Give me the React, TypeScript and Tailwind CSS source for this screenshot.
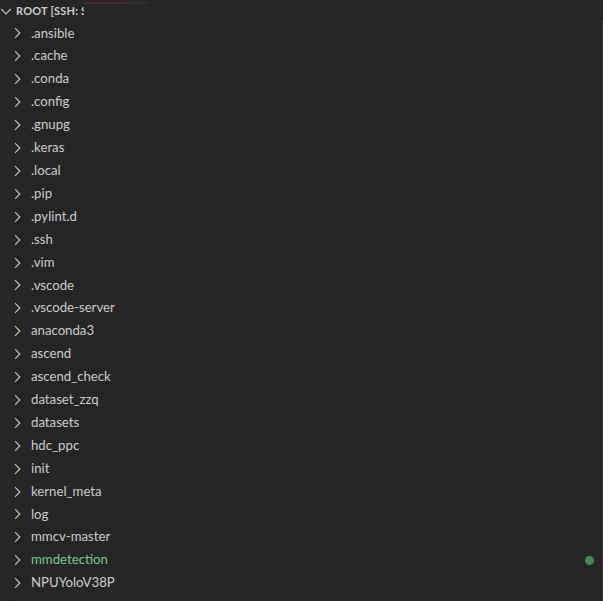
import React from "react";

const folders = [
  ".ansible",
  ".cache",
  ".conda",
  ".config",
  ".gnupg",
  ".keras",
  ".local",
  ".pip",
  ".pylint.d",
  ".ssh",
  ".vim",
  ".vscode",
  ".vscode-server",
  "anaconda3",
  "ascend",
  "ascend_check",
  "dataset_zzq",
  "datasets",
  "hdc_ppc",
  "init",
  "kernel_meta",
  "log",
  "mmcv-master",
  "mmdetection",
  "NPUYoloV38P",
  "opencv",
];

function ChevronRight() {
  return (
    <svg width="16" height="16" viewBox="0 0 16 16" fill="none" className="shrink-0">
      <path d="M6 3.2 L10.8 8 L6 12.8" stroke="#c5c5c5" strokeWidth="1.2" />
    </svg>
  );
}

function ChevronDown() {
  return (
    <svg width="16" height="16" viewBox="0 0 16 16" fill="none" className="shrink-0">
      <path d="M3.2 6 L8 10.8 L12.8 6" stroke="#c5c5c5" strokeWidth="1.2" />
    </svg>
  );
}

export default function App() {
  return (
    <div
      className="w-[603px] h-[601px] overflow-hidden bg-[#252526] text-[#cccccc] relative"
      style={{ fontFamily: '"Segoe UI", Lato, "Noto Sans", sans-serif' }}
    >
      <div className="absolute left-[84px] top-[2px] h-[2px] w-[64px] bg-[#2e2e2e]">
        <div className="h-full w-[42px] bg-[#4a2a2a]" />
      </div>
      <div className="absolute right-0 top-[20px] bottom-0 w-px bg-[#3a3a3a]" />

      <div className="h-[22px] flex items-center">
        <div className="-ml-[2px] flex items-center">
          <ChevronDown />
        </div>
        <span className="ml-[2px] text-[11px] font-bold tracking-[0.2px] whitespace-nowrap">
          ROOT [SSH: <span className="inline-block w-[3px] overflow-hidden align-bottom">S</span>
        </span>
      </div>

      <div className="flex flex-col">
        {folders.map((name) => (
          <div key={name} className="h-[22.92px] flex items-center pl-[9px] pr-3 relative">
            <ChevronRight />
            <span
              className={`ml-[6px] text-[13.2px] whitespace-nowrap ${
                name === "mmdetection" ? "text-[#73c991]" : ""
              }`}
            >
              {name}
            </span>
            {name === "mmdetection" && (
              <span className="absolute right-[9px] w-[9px] h-[9px] rounded-full bg-[#468a5c]" />
            )}
          </div>
        ))}
      </div>
    </div>
  );
}
